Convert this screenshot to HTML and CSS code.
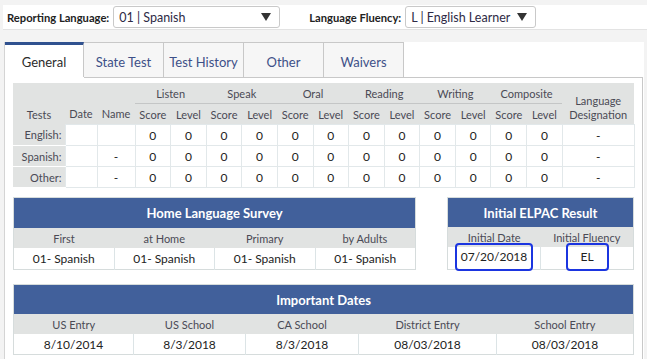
FILE: index.html
```html
<!DOCTYPE html>
<html>
<head>
<meta charset="utf-8">
<link rel="stylesheet" href="styles.css">
</head>
<body>
<div class="topbar">
  <span class="lbl">Reporting Language:</span>
  <div class="select sel1"><span>01 | Spanish</span><i class="caret"></i></div>
  <span class="lbl lbl2">Language Fluency:</span>
  <div class="select sel2"><span>L | English Learner</span><i class="caret"></i></div>
</div>
<div class="tabwrap">
  <div class="tabs">
    <div class="tab active">General</div>
    <div class="tab">State Test</div>
    <div class="tab">Test History</div>
    <div class="tab">Other</div>
    <div class="tab">Waivers</div>
  </div>
  <div class="panel">
    <table class="tests">
      <colgroup>
        <col class="c-tests"><col class="c-date"><col class="c-name">
        <col class="c-n"><col class="c-n"><col class="c-n"><col class="c-n"><col class="c-n"><col class="c-n">
        <col class="c-n"><col class="c-n"><col class="c-n"><col class="c-n"><col class="c-n"><col class="c-n">
        <col class="c-des">
      </colgroup>
      <thead>
        <tr class="h1">
          <th></th><th></th><th></th>
          <th colspan="2" class="grp">Listen</th>
          <th colspan="2" class="grp">Speak</th>
          <th colspan="2" class="grp">Oral</th>
          <th colspan="2" class="grp">Reading</th>
          <th colspan="2" class="grp">Writing</th>
          <th colspan="2" class="grp">Composite</th>
          <th rowspan="2" class="des">Language<br>Designation</th>
        </tr>
        <tr class="h2">
          <th>Tests</th><th>Date</th><th>Name</th>
          <th>Score</th><th>Level</th><th>Score</th><th>Level</th><th>Score</th><th>Level</th>
          <th>Score</th><th>Level</th><th>Score</th><th>Level</th><th>Score</th><th>Level</th>
        </tr>
      </thead>
      <tbody>
        <tr><th class="rl">English:</th><td></td><td></td><td>0</td><td>0</td><td>0</td><td>0</td><td>0</td><td>0</td><td>0</td><td>0</td><td>0</td><td>0</td><td>0</td><td>0</td><td>-</td></tr>
        <tr><th class="rl">Spanish:</th><td></td><td>-</td><td>0</td><td>0</td><td>0</td><td>0</td><td>0</td><td>0</td><td>0</td><td>0</td><td>0</td><td>0</td><td>0</td><td>0</td><td>-</td></tr>
        <tr><th class="rl">Other:</th><td></td><td>-</td><td>0</td><td>0</td><td>0</td><td>0</td><td>0</td><td>0</td><td>0</td><td>0</td><td>0</td><td>0</td><td>0</td><td>0</td><td>-</td></tr>
      </tbody>
    </table>

    <div class="row2">
      <table class="box hls">
        <tr><th colspan="4" class="title">Home Language Survey</th></tr>
        <tr class="sub"><th>First</th><th>at Home</th><th>Primary</th><th>by Adults</th></tr>
        <tr class="val"><td>01- Spanish</td><td>01- Spanish</td><td>01- Spanish</td><td>01- Spanish</td></tr>
      </table>
      <table class="box elpac">
        <tr><th colspan="2" class="title">Initial ELPAC Result</th></tr>
        <tr class="sub"><th>Initial Date</th><th>Initial Fluency</th></tr>
        <tr class="val"><td><span class="hl hl-date">07/20/2018</span></td><td><span class="hl hl-el">EL</span></td></tr>
      </table>
    </div>

    <table class="box dates">
      <colgroup><col class="d1"><col class="d2"><col class="d3"><col class="d4"><col class="d5"></colgroup>
      <tr><th colspan="5" class="title">Important Dates</th></tr>
      <tr class="sub"><th>US Entry</th><th>US School</th><th>CA School</th><th>District Entry</th><th>School Entry</th></tr>
      <tr class="val"><td>8/10/2014</td><td>8/3/2018</td><td>8/3/2018</td><td>08/03/2018</td><td>08/03/2018</td></tr>
    </table>
  </div>
</div>
</body>
</html>
```

FILE: styles.css
```css
html, body {
  margin: 0;
  padding: 0;
  background: #f3f3f3;
  font-family: "Lato", "Open Sans", sans-serif;
  color: #333;
}
.topbar {
  margin: 5px 0 0 3px;
  height: 24px;
  background: #fff;
  border-bottom: 1px solid #e3e3e3;
  display: flex;
  align-items: center;
  padding-left: 4px;
}
.lbl {
  font-weight: 700;
  font-size: 11.2px;
  color: #222;
  margin-right: 4px;
}
.lbl2 { margin-left: 29px; }
.select {
  box-sizing: border-box;
  height: 22px;
  border: 1px solid #c9c9c9;
  border-radius: 3px;
  background: #fff;
  display: flex;
  align-items: center;
  justify-content: space-between;
  padding: 0 6px 0 5px;
  font-size: 12.5px;
  color: #2e2a45;
}
.sel1 { width: 167px; }
.sel2 { width: 131px; }
.caret {
  width: 0; height: 0;
  border-left: 5px solid transparent;
  border-right: 5px solid transparent;
  border-top: 8px solid #333;
  margin-right: 2px;
}
.tabwrap {
  margin: 12px 3px 0 4px;
  background: #fff;
  border-left: 1px solid #d4d4d4;
}
.tabs {
  display: flex;
  height: 35px;
}
.tab {
  box-sizing: border-box;
  width: 80px;
  height: 35px;
  border: 1px solid #c8c8c8;
  border-left: none;
  border-bottom: none;
  background: #f6f6f6;
  color: #3d5088;
  font-size: 13px;
  display: flex;
  align-items: center;
  justify-content: center;
  padding-top: 3px;
}
.tab.active {
  width: 79px;
  background: #fff;
  color: #2b2b2b;
  border-top: 3px solid #30518f;
  padding-top: 1px;
}
.panel {
  box-sizing: border-box;
  width: 638px;
  border-right: 1px solid #c8c8c8;
  position: relative;
  padding: 6px 8px 10px 8px;
  background: #fff;
}
.panel::before {
  content: "";
  position: absolute;
  top: 0; left: 79px; right: 0;
  border-top: 1px solid #c8c8c8;
}
table {
  border-collapse: collapse;
  table-layout: fixed;
}
.tests {
  width: 621px;
  font-size: 11px;
}
.c-tests { width: 52px; }
.c-date { width: 32px; }
.c-name { width: 38px; }
.c-n { width: 35.6px; }
.c-des { width: 72px; }
.tests thead th {
  background: #e1e3e2;
  font-weight: 400;
  color: #4a4a55;
  padding: 0;
}
.tests .h1 th { height: 20px; }
.tests .h1 th.grp {
  border-bottom: 1px solid #c4c6c6;
}
.tests .h2 th { height: 20px; }
.tests thead th.des { line-height: 14px; padding-top: 9px; }
.tests tbody td, .tests tbody th {
  height: 20px;
  padding: 0;
  text-align: center;
  font-size: 12px;
  border: 1px solid #e2e8ea;
  color: #222;
}
.tests tbody th.rl {
  background: #e1e3e2;
  font-weight: 400;
  font-size: 11px;
  text-align: right;
  padding-right: 3px;
  color: #4a4a55;
  border: none;
  border-bottom: 1px solid #fff;
}
.row2 {
  display: flex;
  justify-content: space-between;
  margin-top: 9px;
}
.box {
  border: 1px solid #d6dcdc;
}
.box th.title {
  background: #41609b;
  color: #fff;
  font-size: 13px;
  font-weight: 700;
  height: 29px;
  padding: 0;
}
.box .sub th {
  background: #e1e3e2;
  font-weight: 400;
  font-size: 11px;
  color: #4a4a55;
  height: 20px;
  padding: 0;
}
.box .val td {
  text-align: center;
  font-size: 12px;
  color: #222;
  height: 20px;
  padding: 0;
  border-left: 1px solid #dce4e6;
}
.box .val td:first-child { border-left: none; }
.hls { width: 403px; }
.elpac { width: 187px; }
.elpac .val td { height: 22px; }
.hl {
  display: inline-block;
  border: 2px solid #1b35e0;
  border-radius: 4px;
  box-sizing: border-box;
  height: 28px;
  line-height: 24px;
  margin-top: -5px;
  margin-bottom: -3px;
}
.hl-date { width: 78px; }
.hl-el { width: 43px; }
.dates {
  width: 621px;
  margin-top: 14px;
}
.d1 { width: 120px; }
.d2 { width: 112px; }
.d3 { width: 113px; }
.d4 { width: 138px; }
.d5 { width: 137px; }
```
